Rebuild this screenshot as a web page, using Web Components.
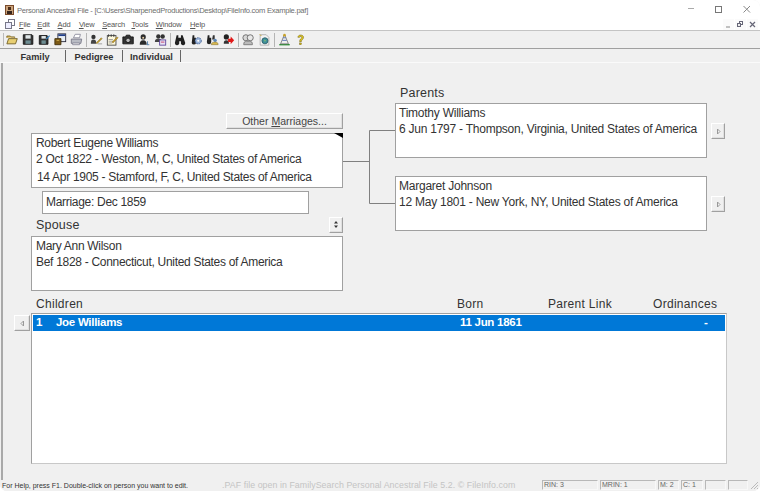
<!DOCTYPE html>
<html>
<head>
<meta charset="utf-8">
<title>Personal Ancestral File</title>
<style>
  html, body { margin: 0; height: 100%; background: #fff; }
  body { font: 12px "Liberation Sans", Arial, sans-serif; color: #222; overflow: hidden; }
</style>
</head>
<body>
<paf-window>
  <paf-titlebar slot="title">Personal Ancestral File - [C:\Users\SharpenedProductions\Desktop\FileInfo.com Example.paf]</paf-titlebar>
  <paf-menubar slot="menu"></paf-menubar>
  <paf-toolbar slot="tools"></paf-toolbar>
  <paf-tabs slot="tabs"></paf-tabs>
  <paf-family slot="main"></paf-family>
  <paf-status slot="status"></paf-status>
</paf-window>

<script>
class PafWindow extends HTMLElement {
  constructor() {
    super();
    this.attachShadow({ mode: "open" });
    this.shadowRoot.innerHTML = `
      <style>
        :host { display: flex; flex-direction: column; width: 760px; height: 491px; background: #f0f0f0; box-sizing: border-box; border-radius: 7px; overflow: hidden; }
        .main { flex: 1; min-height: 0; display: flex; flex-direction: column; }
      </style>
      <slot name="title"></slot>
      <slot name="menu"></slot>
      <slot name="tools"></slot>
      <slot name="tabs"></slot>
      <div class="main"><slot name="main"></slot></div>
      <slot name="status"></slot>
    `;
  }
}

class PafTitlebar extends HTMLElement {
  constructor() {
    super();
    this.attachShadow({ mode: "open" });
    this.shadowRoot.innerHTML = `
      <style>
        :host { display: flex; align-items: center; box-sizing: border-box; height: 18px; background: #fff; font-size: 7.6px; letter-spacing: -.27px; color: #6e6e6e; padding: 2px 0 0 5px; position: relative; white-space: nowrap; }
        .logo { width: 9px; height: 10px; margin-right: 3px; flex: none; }
        .caps { position: absolute; right: 0; top: 0; display: flex; }
        .caps svg { display: block; }
      </style>
      <svg class="logo" viewBox="0 0 9 10"><rect width="9" height="10" fill="#7a4a2a"/><rect x="1" y="1" width="7" height="8" fill="#c9a27a"/><rect x="3" y="2" width="3" height="3" fill="#4a2c18"/><rect x="2" y="6" width="5" height="3" fill="#35251c"/></svg>
      <span><slot></slot></span>
      <div class="caps">
        <svg width="126" height="18" viewBox="0 0 126 18" fill="none" stroke="#777" stroke-width="1">
          <path d="M54 8.500h6" stroke="#aaa"/>
          <rect x="81.500" y="6.500" width="6" height="6"/>
          <path d="M109.500 6l6.500 6.500M116 6l-6.500 6.500" stroke="#888"/>
        </svg>
      </div>
    `;
  }
}

class PafMenubar extends HTMLElement {
  constructor() {
    super();
    this.attachShadow({ mode: "open" });
    const items = [["F","ile",10],["E","dit",12],["A","dd",13],["V","iew",15],["S","earch",21],["T","ools",16],["W","indow",26],["H","elp",15]];
    this.shadowRoot.innerHTML = `
      <style>
        :host { display: flex; align-items: center; box-sizing: border-box; height: 12px; background: #fff; font-size: 7.500px; letter-spacing: -.15px; color: #555; padding-left: 5px; position: relative; white-space: nowrap; }
        .doc { width: 10px; height: 10px; margin-right: 4px; flex: none; }
        span { margin-right: 8.300px; }
        u { text-underline-offset: 1px; }
        .mdi { position: absolute; right: 2px; top: 1px; display: flex; gap: 1px; }
        .mdi svg { display: block; background: #fbfbfb; }
      </style>
      <svg class="doc" viewBox="0 0 10 10" fill="none" stroke="#778"><rect x="3.500" y=".5" width="6" height="6"/><rect x=".5" y="3.500" width="6" height="6" fill="#eef"/></svg>
      ${items.map(([a, b, w]) => `<span style="width:${w}px"><u>${a}</u>${b}</span>`).join("")}
      <div class="mdi">
        <svg width="11" height="11" viewBox="0 0 11 11"><path d="M3 8h4" stroke="#888"/></svg>
        <svg width="11" height="11" viewBox="0 0 11 11" fill="none" stroke="#667"><rect x="4.500" y="2.500" width="3" height="3"/><rect x="2.500" y="4.500" width="3" height="3" fill="#eee"/></svg>
        <svg width="11" height="11" viewBox="0 0 11 11" stroke="#667" stroke-width="1.200"><path d="M3 3l5 5M8 3l-5 5"/></svg>
      </div>
    `;
  }
}

const TOOL_ICONS = {
  open: `<path d="M1 5V3h4l1 1h4v1" fill="#d9b75a" stroke="#7a6420"/><path d="M1 12l2-6h10l-2 6z" fill="#e8cf72" stroke="#6d5a1c"/>`,
  save: `<path d="M1.500 1.500h10l1 1v10h-11z" fill="#333" stroke="#111"/><rect x="4" y="2" width="6" height="4" fill="#dfe6e8"/><rect x="4" y="8" width="6" height="4" fill="#6d8d92"/>`,
  saveas: `<path d="M1.500 2.500h9l1 1v9h-10z" fill="#333" stroke="#111"/><rect x="4" y="3" width="5" height="3" fill="#dfe6e8"/><rect x="4" y="8" width="5" height="4" fill="#6d8d92"/><path d="M9 6l4-4 1 1-4 4z" fill="#3a86c8"/>`,
  book: `<rect x="4.500" y=".5" width="9" height="9" fill="#e7eef5" stroke="#223"/><rect x="5" y="1" width="8" height="2" fill="#223f8a"/><path d="M1 6h7v7H1z" fill="#7c5a16" stroke="#3d2c08"/><path d="M3 8h3" stroke="#d9b75a"/>`,
  print: `<path d="M4 5l2-4h6l-1 4z" fill="#fff" stroke="#889"/><path d="M1.500 6.500h12l-1 5h-11z" fill="#b9bcc4" stroke="#778"/><path d="M3 11h8v2H3z" fill="#e8e8e8" stroke="#889"/>`,
  ink: `<circle cx="4" cy="4" r="2.500" fill="#333"/><path d="M1 12c0-4 1-5 3-5s3 1 3 3v2z" fill="#444"/><path d="M7 11l6-6 1 1-6 6z" fill="#c9a227" stroke="#6d5a1c" stroke-width=".5"/><path d="M9 12h5" stroke="#999"/>`,
  note: `<rect x="1.500" y="2.500" width="10" height="11" fill="#fdf8dc" stroke="#444"/><path d="M3 1v3M6 1v3M9 1v3" stroke="#333"/><path d="M3 7h5M3 9h5M3 11h4" stroke="#999"/><path d="M7 10l6-6 1 1-6 6z" fill="#d0a020" stroke="#6d5a1c" stroke-width=".5"/>`,
  camera: `<path d="M1 4h3l1-2h4l1 2h3v8H1z" fill="#333" stroke="#111"/><circle cx="7" cy="8" r="2.600" fill="#bbb" stroke="#111"/>`,
  person: `<circle cx="6" cy="4" r="3" fill="#2c2c2c"/><path d="M5 4h2v2H5z" fill="#e8cfa8"/><path d="M2 13c0-3 1-5 4-5s4 2 4 5z" fill="#2a2a2a"/><path d="M11 9v4M10 13h3" stroke="#4a7aa8"/>`,
  people: `<circle cx="5" cy="3.500" r="2.500" fill="#333"/><circle cx="10" cy="3.500" r="2.500" fill="#333"/><path d="M1 10c0-3 1-4 4-4s4 1 4 4z" fill="#444"/><rect x="6.500" y="7.500" width="7" height="6" fill="#e8e4f4" stroke="#5a3f98"/><path d="M8 10h4" stroke="#c03060"/>`,
  binoc: `<path d="M3 2h2v3h3V2h2l3 9a2.600 2.600 0 0 1-5 1V9H6v3a2.600 2.600 0 0 1-5-1z" fill="#1f1f1f"/>`,
  binocgear: `<path d="M3 2h2v3h2v6a2.600 2.600 0 0 1-5 0z" fill="#222"/><circle cx="9.500" cy="8.500" r="3.600" fill="#9bb4d8" stroke="#3d5a90" stroke-dasharray="2 1"/><circle cx="9.500" cy="8.500" r="1.200" fill="#fff"/>`,
  binocpeople: `<path d="M2 2h2v3h2v5a2.400 2.400 0 0 1-5 0z" fill="#222"/><path d="M8 2h2v5H7z" fill="#333"/><circle cx="10.500" cy="8" r="2" fill="#5a86b8"/><path d="M6 13c0-2 2-3 4.500-3s3.500 1 3.500 3z" fill="#d8b850" stroke="#6a5a20" stroke-width=".5"/>`,
  arrow: `<circle cx="5" cy="4" r="3" fill="#222"/><path d="M2 12c0-3 1-4 3-4s3 1 3 4z" fill="#333"/><path d="M7 6h3V3.500l4 4.500-4 4.500V10H7z" fill="#e01818"/>`,
  faces: `<circle cx="4.500" cy="5" r="3.500" fill="#d8d8d8" stroke="#666"/><circle cx="9.500" cy="5" r="3.500" fill="#e8e8e8" stroke="#666"/><path d="M2 13c0-3 1-4 3-4h4c2 0 3 1 3 4z" fill="#bbb" stroke="#777"/>`,
  globe: `<path d="M2.500 1.500h7l3 3v9h-10z" fill="#f4f4f4" stroke="#aaa"/><path d="M2 1l2 2" stroke="#c9a227"/><circle cx="8" cy="8.500" r="3.500" fill="#3f8f9a" stroke="#2a5f68"/><path d="M7 7l2 1-1 2z" fill="#8fc86a"/>`,
  tree: `<path d="M1.500 13h12" stroke="#1f8a2a" stroke-width="1.500"/><path d="M7.500 1L3 12h9z" fill="#eee" stroke="#777"/><circle cx="7.500" cy="2" r="1.500" fill="#c9a227"/><path d="M5 8h5M6 5h3" stroke="#4a6ab0"/>`,
  help: `<path d="M4.500 4.500C4.500 1 11 1 11 4.500c0 2.500-2.500 2.500-2.500 5H6.500c0-3.500 2.500-3.500 2.500-5 0-1.200-2.200-1.200-2.500 0z" fill="#e0c820" stroke="#6a5a10" stroke-width=".6"/><rect x="6.500" y="11" width="2" height="2" fill="#d0b818" stroke="#6a5a10" stroke-width=".5"/>`
};

class PafToolbar extends HTMLElement {
  constructor() {
    super();
    this.attachShadow({ mode: "open" });
    const groups = [
      ["open", "save", "saveas", "book", "print"],
      ["ink", "note", "camera", "person", "people"],
      ["binoc", "binocgear", "binocpeople", "arrow"],
      ["faces", "globe"],
      ["tree", "help"]
    ];
    const icon = n => `<svg width="13" height="13" viewBox="0 0 15 14">${TOOL_ICONS[n]}</svg>`;
    this.shadowRoot.innerHTML = `
      <style>
        :host { display: flex; align-items: center; box-sizing: border-box; height: 19px; padding: 0 0 0 3px; background: #f0f0f0; border-bottom: 1px solid #a0a0a0; border-top: 1px solid #c4c4c4; }
        .grip { width: 1px; height: 13px; background: #bbb; margin-right: 2px; }
        .group { display: flex; gap: 3px; }
        .sep { width: 1px; height: 14px; background: #b5b5b5; margin: 0 3px; }
        svg { display: block; filter: blur(.25px); }
      </style>
      <div class="grip"></div>
      ${groups.map(g => `<div class="group">${g.map(icon).join("")}</div>`).join('<div class="sep"></div>')}
    `;
  }
}

class PafTabs extends HTMLElement {
  constructor() {
    super();
    this.attachShadow({ mode: "open" });
    this.shadowRoot.innerHTML = `
      <style>
        :host { display: flex; box-sizing: border-box; height: 14px; padding: 1px 0 0 5px; border-bottom: 1px solid #fafafa; background: #f0f0f0; font: bold 9.200px "Liberation Sans", sans-serif; color: #333; }
        div { display: flex; align-items: center; justify-content: center; height: 12px; padding-top: 1px; box-sizing: border-box; border-right: 1px solid #666; }
        .a { width: 61px; } .b { width: 57px; } .c { width: 58px; }
      </style>
      <div class="a">Family</div><div class="b">Pedigree</div><div class="c">Individual</div>
    `;
  }
}

class PafPerson extends HTMLElement {
  constructor() {
    super();
    this.attachShadow({ mode: "open" });
    this.shadowRoot.innerHTML = `
      <style>
        :host { display: block; box-sizing: border-box; width: 312px; height: 55px; background: #fff; border: 1px solid #a0a0a0; padding: 1px 4px; font-size: 12px; letter-spacing: -.3px; line-height: 16px; color: #333; position: relative; white-space: nowrap; }
        :host([flagged])::after { content: ""; position: absolute; right: -1px; top: -1px; border-style: solid; border-width: 5px 0 0 9px; border-color: #000 transparent transparent transparent; }
        ::slotted([slot="third"]) { display: block; margin-top: 2px; padding-left: 1px; }
      </style>
      <slot></slot>
      <slot name="third"></slot>
    `;
  }
}

class PafButton extends HTMLElement {
  constructor() {
    super();
    this.attachShadow({ mode: "open" });
    this.shadowRoot.innerHTML = `
      <style>
        :host { display: inline-flex; align-items: center; justify-content: center; box-sizing: border-box; height: 16px; background: #f0f0f0; border: 1px solid; border-color: #fff #a0a0a0 #a0a0a0 #fff; box-shadow: inset -1px -1px 0 #e0e0e0; font-size: 10.500px; color: #444; }
      </style>
      <span><slot></slot></span>
    `;
  }
}

class PafFamily extends HTMLElement {
  constructor() {
    super();
    this.attachShadow({ mode: "open" });
    this.shadowRoot.innerHTML = `
      <style>
        :host { display: flex; flex-direction: column; flex: 1; box-sizing: border-box; height: 100%; margin-left: 1px; border-left: 2px solid #a9a9a9; color: #333; font-size: 12px; }
        .top { display: flex; height: 228px; padding-left: 28px; }
        .left { width: 312px; display: flex; flex-direction: column; padding-top: 50px; box-sizing: border-box; }
        .row { display: flex; justify-content: flex-end; }
        .other { width: 117px; margin-bottom: 4px; }
        .marriage { box-sizing: border-box; width: 267px; height: 23px; margin: 3px 0 0 11px; background: #fff; border: 1px solid #a0a0a0; padding: 0 3px; line-height: 21px; font-size: 12px; letter-spacing: -.3px; color: #333; }
        .spouse { display: flex; justify-content: space-between; align-items: center; height: 16px; margin: 3px 0; padding-left: 5px; font-size: 12.500px; letter-spacing: .2px; }
        .spin { width: 14px; }
        .links { display: block; width: 52px; flex: none; margin-top: 40px; height: 180px; }
        .right { display: flex; flex-direction: column; padding-top: 23px; }
        .label { height: 17px; padding-left: 5px; line-height: 14px; font-size: 12.500px; letter-spacing: .2px; }
        .parent { display: flex; align-items: center; gap: 4px; margin-bottom: 18px; }
        .parent paf-person { padding-left: 3px; letter-spacing: -.24px; }
        .go { width: 14px; }
        .heads { display: grid; grid-template-columns: 421px 91px 105px 1fr; height: 16px; padding-left: 33px; margin-top: 6px; line-height: 14px; font-size: 12px; letter-spacing: .3px; }
        .lower { display: flex; flex: 1; min-height: 0; padding-left: 11px; align-items: flex-start; }
        .prev { width: 16px; margin: 2px 1px 0 0; }
        .list { box-sizing: border-box; width: 696px; height: 151px; background: #fff; border: 1px solid #a0a0a0; border-right-color: #c8c8c8; border-bottom-color: #c8c8c8; padding: 1px; }
        .sel { display: grid; grid-template-columns: 20px 404px 1fr 21px; height: 16px; line-height: 15px; padding-left: 3px; background: #0078d7; color: #fff; font-weight: bold; font-size: 11.500px; letter-spacing: -.28px; }
      </style>
      <div class="top">
        <div class="left">
          <div class="row"><paf-button class="other">Other <u>M</u>arriages...</paf-button></div>
          <paf-person flagged>Robert Eugene Williams<br>2 Oct 1822 - Weston, M, C, United States of America<span slot="third">14 Apr 1905 - Stamford, F, C, United States of America</span></paf-person>
          <div class="marriage">Marriage: Dec 1859</div>
          <div class="spouse"><span>Spouse</span><paf-button class="spin"><svg width="6" height="9" viewBox="0 0 6 9"><path d="M3 1l2 2.500H1zM3 8L1 5.500h4z" fill="#333"/></svg></paf-button></div>
          <paf-person>Mary Ann Wilson<br>Bef 1828 - Connecticut, United States of America</paf-person>
        </div>
        <svg class="links" viewBox="0 0 52 180" fill="none" stroke="#808080">
          <path d="M0 58.500h26.500M26.500 27.500v73M26.500 27.500H52M26.500 100.500H52"/>
        </svg>
        <div class="right">
          <div class="label">Parents</div>
          <div class="parent"><paf-person>Timothy Williams<br>6 Jun 1797 - Thompson, Virginia, United States of America</paf-person><paf-button class="go"><svg width="5" height="7" viewBox="0 0 5 7"><path d="M1.500 1l2.500 2.500L1.500 6z" fill="none" stroke="#999"/></svg></paf-button></div>
          <div class="parent"><paf-person>Margaret Johnson<br>12 May 1801 - New York, NY, United States of America</paf-person><paf-button class="go"><svg width="5" height="7" viewBox="0 0 5 7"><path d="M1.500 1l2.500 2.500L1.500 6z" fill="none" stroke="#999"/></svg></paf-button></div>
        </div>
      </div>
      <div class="heads"><span>Children</span><span>Born</span><span>Parent Link</span><span>Ordinances</span></div>
      <div class="lower">
        <paf-button class="prev"><svg width="5" height="7" viewBox="0 0 5 7"><path d="M3.500 1L1 3.500 3.500 6z" fill="none" stroke="#999"/></svg></paf-button>
        <div class="list">
          <div class="sel"><span>1</span><span>Joe Williams</span><span>11 Jun 1861</span><span>-</span></div>
        </div>
      </div>
    `;
  }
}

class PafStatus extends HTMLElement {
  constructor() {
    super();
    this.attachShadow({ mode: "open" });
    this.shadowRoot.innerHTML = `
      <style>
        :host { display: flex; align-items: center; box-sizing: border-box; height: 11px; position: relative; padding: 0 0 1px 2px; font-size: 7px; color: #444; background: #f0f0f0; }
        .help { width: 220px; flex: none; color: #333; white-space: nowrap; }
        .mark { width: 320px; flex: none; color: #c4c4c4; font-size: 8.800px; letter-spacing: .06px; white-space: nowrap; }
        .p { box-sizing: border-box; flex: none; height: 10px; line-height: 8px; border: 1px solid; border-color: #b8b8b8 #f8f8f8 #f8f8f8 #b8b8b8; padding-left: 1px; margin-right: 2px; color: #666; }
        .grip { position: absolute; right: 1px; bottom: 1px; }
      </style>
      <span class="help">For Help, press F1. Double-click on person you want to edit.</span>
      <span class="mark">.PAF file open in FamilySearch Personal Ancestral File 5.2. © FileInfo.com</span>
      <span class="p" style="width:56px">RIN: 3</span>
      <span class="p" style="width:56px">MRIN: 1</span>
      <span class="p" style="width:21px">M: 2</span>
      <span class="p" style="width:22px">C: 1</span>
      <span class="p" style="width:21px"></span>
      <span class="p" style="width:20px"></span>
      <svg class="grip" width="9" height="9" viewBox="0 0 9 9" stroke="#bbb"><path d="M8 1L1 8M8 4L4 8M8 7L7 8"/></svg>
    `;
  }
}

customElements.define("paf-window", PafWindow);
customElements.define("paf-titlebar", PafTitlebar);
customElements.define("paf-menubar", PafMenubar);
customElements.define("paf-toolbar", PafToolbar);
customElements.define("paf-tabs", PafTabs);
customElements.define("paf-person", PafPerson);
customElements.define("paf-button", PafButton);
customElements.define("paf-family", PafFamily);
customElements.define("paf-status", PafStatus);
</script>
</body>
</html>
